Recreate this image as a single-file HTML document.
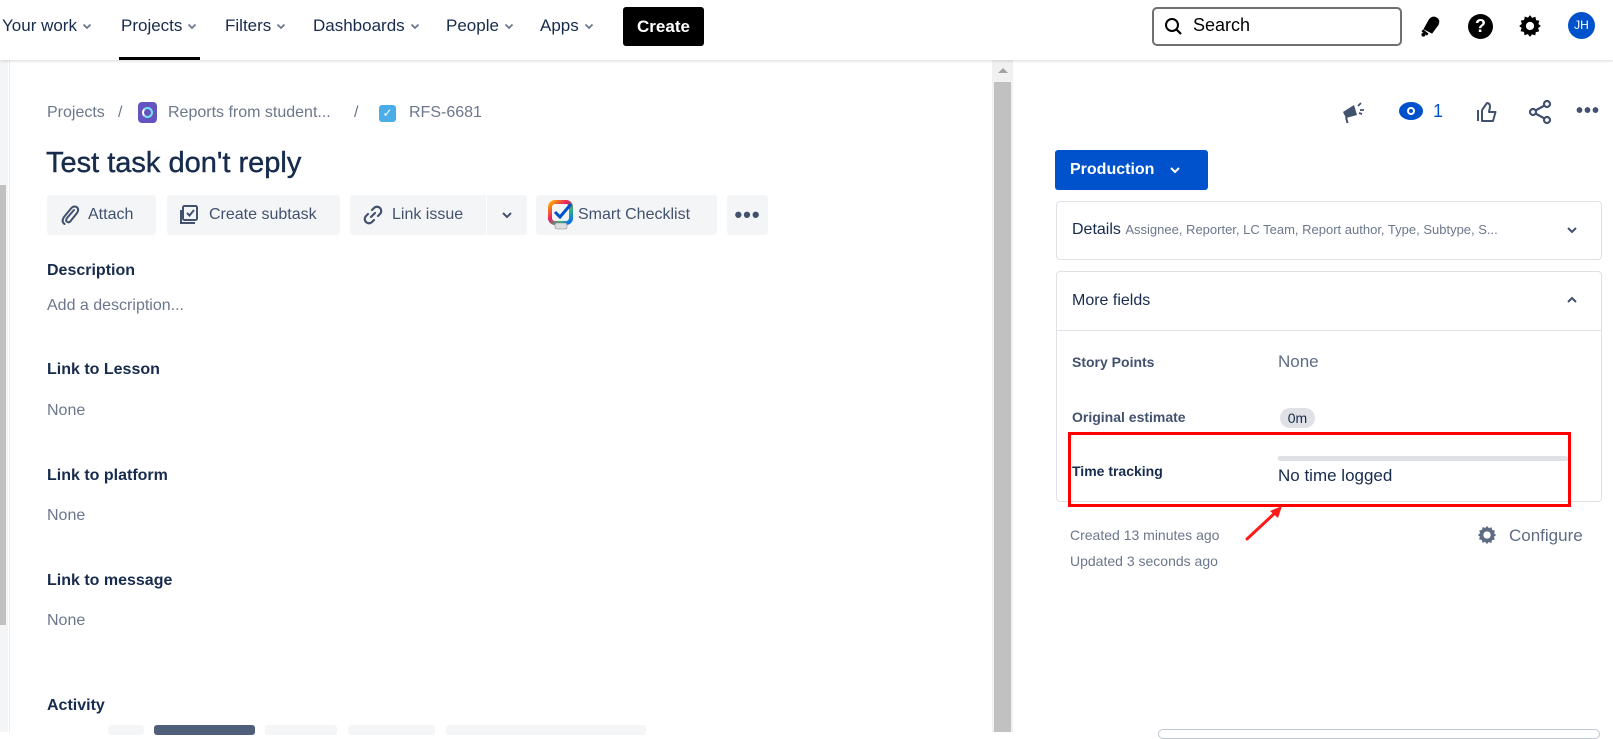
<!DOCTYPE html>
<html><head><meta charset="utf-8"><style>
*{box-sizing:border-box;margin:0;padding:0}
body{width:1613px;height:732px;overflow:hidden;background:#fff;font-family:"Liberation Sans",sans-serif;color:#172b4d;position:relative}
.a{position:absolute;white-space:nowrap}
.nav{position:absolute;left:0;top:0;width:1613px;height:60px;background:#fff;box-shadow:0 1px 3px rgba(0,0,0,.15);z-index:2}
.ni{position:absolute;top:16px;font-size:17px;color:#172b4d;display:flex;align-items:center}
.ni svg{margin-left:5px;margin-top:1px}
.btn{position:absolute;top:195px;height:40px;background:#f4f5f7;border-radius:3px;font-size:16px;color:#42526e;display:flex;align-items:center}
.lbl{position:absolute;left:47px;font-size:16px;font-weight:bold;color:#172b4d}
.none{position:absolute;left:47px;font-size:16px;color:#6b778c}
.card{position:absolute;left:1056px;width:546px;border:1px solid #dfe1e6;border-radius:4px}
.fl{position:absolute;left:1072px;font-size:14px;font-weight:bold;color:#42526e}
</style></head><body>
<div class="nav">
 <div class="ni" style="left:2px">Your work<svg width="10" height="7" viewBox="0 0 10 7"><path d="M1.5 1.5l3.5 3.5 3.5-3.5" fill="none" stroke="#6b778c" stroke-width="1.8"/></svg></div>
 <div class="ni" style="left:121px">Projects<svg width="10" height="7" viewBox="0 0 10 7"><path d="M1.5 1.5l3.5 3.5 3.5-3.5" fill="none" stroke="#6b778c" stroke-width="1.8"/></svg></div>
 <div class="a" style="left:119px;top:57px;width:81px;height:3px;background:#000"></div>
 <div class="ni" style="left:225px">Filters<svg width="10" height="7" viewBox="0 0 10 7"><path d="M1.5 1.5l3.5 3.5 3.5-3.5" fill="none" stroke="#6b778c" stroke-width="1.8"/></svg></div>
 <div class="ni" style="left:313px">Dashboards<svg width="10" height="7" viewBox="0 0 10 7"><path d="M1.5 1.5l3.5 3.5 3.5-3.5" fill="none" stroke="#6b778c" stroke-width="1.8"/></svg></div>
 <div class="ni" style="left:446px">People<svg width="10" height="7" viewBox="0 0 10 7"><path d="M1.5 1.5l3.5 3.5 3.5-3.5" fill="none" stroke="#6b778c" stroke-width="1.8"/></svg></div>
 <div class="ni" style="left:540px">Apps<svg width="10" height="7" viewBox="0 0 10 7"><path d="M1.5 1.5l3.5 3.5 3.5-3.5" fill="none" stroke="#6b778c" stroke-width="1.8"/></svg></div>
 <div class="a" style="left:623px;top:7px;width:81px;height:39px;background:#000;border-radius:3px;color:#fff;font-size:17px;font-weight:bold;text-align:center;line-height:39px">Create</div>
 <div class="a" style="left:1152px;top:7px;width:250px;height:39px;border:2px solid #707070;border-radius:5px"></div>
 <svg class="a" style="left:1164px;top:17px" width="20" height="20" viewBox="0 0 20 20"><circle cx="8" cy="8" r="6" fill="none" stroke="#000" stroke-width="2"/><path d="M12.5 12.5 17 17" stroke="#000" stroke-width="2.2"/></svg>
 <div class="a" style="left:1193px;top:15px;font-size:18px;color:#000">Search</div>
 <svg class="a" style="left:1418px;top:13px" width="26" height="26" viewBox="0 0 24 24"><path d="M5 15 L10 6 Q13 2 17 4 Q21 6 19 11 L13 19Z" fill="#000"/><path d="M4 16l5 4" stroke="#000" stroke-width="2.4"/><circle cx="5" cy="20" r="1.8" fill="#000"/></svg>
 <div class="a" style="left:1468px;top:14px;width:25px;height:25px;border-radius:50%;background:#000;color:#fff;font-weight:bold;font-size:18px;text-align:center;line-height:25px">?</div>
 <svg class="a" style="left:1517px;top:13px" width="26" height="26" viewBox="0 0 24 24"><path d="M12 2l2 2.5 3-1 .6 3.1 3.1.6-1 3L22 12l-2.5 2 1 3-3.1.6-.6 3.1-3-1L12 22l-2-2.5-3 1-.6-3.1-3.1-.6 1-3L2 12l2.5-2-1-3 3.1-.6.6-3.1 3 1z" fill="#000"/><circle cx="12" cy="12" r="3.8" fill="#fff"/></svg>
 <div class="a" style="left:1568px;top:12px;width:27px;height:27px;border-radius:50%;background:#0052cc;color:#fff;font-size:12px;text-align:center;line-height:27px">JH</div>
</div>
<div class="a" style="left:0;top:60px;width:8px;height:672px;background:#f4f5f7"></div>
<div class="a" style="left:0;top:185px;width:6px;height:440px;background:#c1c1c1"></div>
<div class="a" style="left:9px;top:60px;width:1px;height:672px;background:#ebecf0"></div>
<div class="a" style="left:992px;top:60px;width:21px;height:672px;background:#f1f1f1"></div>
<div class="a" style="left:998px;top:68px;width:0;height:0;border-left:5px solid transparent;border-right:5px solid transparent;border-bottom:5px solid #a3a3a3"></div>
<div class="a" style="left:994px;top:82px;width:17px;height:650px;background:#c1c1c1"></div>

<div class="a" style="left:47px;top:104px;font-size:16px;color:#6b778c">Projects</div>
<div class="a" style="left:118px;top:104px;font-size:16px;color:#6b778c">/</div>
<div class="a" style="left:138px;top:102px;width:19px;height:21px;background:#6554c0;border-radius:4px"><div style="margin:5px 4px;width:11px;height:11px;border-radius:50%;border:2px solid #79e2f2;border-left-color:#fff"></div></div>
<div class="a" style="left:168px;top:104px;font-size:16px;color:#6b778c">Reports from student...</div>
<div class="a" style="left:354px;top:104px;font-size:16px;color:#6b778c">/</div>
<div class="a" style="left:379px;top:105px;width:17px;height:17px;background:#4bade8;border-radius:3px;color:#fff;font-size:12px;text-align:center;line-height:17px">✓</div>
<div class="a" style="left:409px;top:104px;font-size:16px;color:#6b778c">RFS-6681</div>
<div class="a" style="left:46px;top:147px;font-size:29px;color:#172b4d;-webkit-text-stroke:0.4px #172b4d">Test task don't reply</div>

<div class="btn" style="left:47px;width:109px"><svg style="margin:0 8px 0 13px" width="20" height="22" viewBox="0 0 20 22"><path d="M14 6 L7 14 Q5 17 7.5 18 Q9.5 19 11 16.5 L17 9 Q19.5 5 16.5 3 Q13.5 1.5 11 4.5 L4 13 Q1 17.5 4.5 20" fill="none" stroke="#42526e" stroke-width="2" stroke-linecap="round"/></svg>Attach</div>
<div class="btn" style="left:167px;width:173px"><svg style="margin:0 8px 0 12px" width="22" height="22" viewBox="0 0 22 22"><rect x="4" y="2" width="14" height="14" rx="1.5" fill="none" stroke="#42526e" stroke-width="2"/><path d="M8 9l2.5 2.5L15 6" fill="none" stroke="#42526e" stroke-width="2"/><path d="M2 6v13h14" fill="none" stroke="#42526e" stroke-width="2"/></svg>Create subtask</div>
<div class="btn" style="left:350px;width:136px;border-radius:3px 0 0 3px"><svg style="margin:0 8px 0 12px" width="22" height="22" viewBox="0 0 22 22"><path d="M9 13l4-4M10 6l2-2a4 4 0 0 1 6 6l-2 2M12 16l-2 2a4 4 0 0 1-6-6l2-2" fill="none" stroke="#42526e" stroke-width="2.2" stroke-linecap="round"/></svg>Link issue</div>
<div class="btn" style="left:487px;width:40px;border-radius:0 3px 3px 0;justify-content:center"><svg width="12" height="8" viewBox="0 0 12 8"><path d="M2 2l4 4 4-4" fill="none" stroke="#42526e" stroke-width="2"/></svg></div>
<div class="btn" style="left:536px;width:181px"><svg style="margin:0 4px 0 12px" width="26" height="30" viewBox="0 0 26 30"><rect x="2" y="2" width="21" height="21" rx="5" fill="none" stroke="url(#g)" stroke-width="4"/><defs><linearGradient id="g" x1="0" y1="0" x2="1" y2="1"><stop offset="0" stop-color="#ffab00"/><stop offset=".4" stop-color="#e91e63"/><stop offset=".7" stop-color="#36b37e"/><stop offset="1" stop-color="#0065ff"/></linearGradient></defs><path d="M7 12l5 5 11-13" fill="none" stroke="#0052cc" stroke-width="3"/><rect x="7" y="23" width="12" height="6" rx="2" fill="#ddd" stroke="#888" stroke-width=".6"/></svg>Smart Checklist</div>
<div class="btn" style="left:727px;width:41px;justify-content:center;font-size:22px;font-weight:bold;letter-spacing:1px;color:#42526e">•••</div>

<div class="lbl" style="top:262px">Description</div>
<div class="none" style="top:297px">Add a description...</div>
<div class="lbl" style="top:361px">Link to Lesson</div>
<div class="none" style="top:402px">None</div>
<div class="lbl" style="top:467px">Link to platform</div>
<div class="none" style="top:507px">None</div>
<div class="lbl" style="top:572px">Link to message</div>
<div class="none" style="top:612px">None</div>
<div class="lbl" style="top:697px">Activity</div>
<div class="a" style="left:108px;top:725px;width:36px;height:10px;background:#f4f5f7;border-radius:3px"></div>
<div class="a" style="left:154px;top:725px;width:101px;height:10px;background:#505f79;border-radius:3px"></div>
<div class="a" style="left:265px;top:725px;width:72px;height:10px;background:#f4f5f7;border-radius:3px"></div>
<div class="a" style="left:348px;top:725px;width:87px;height:10px;background:#f4f5f7;border-radius:3px"></div>
<div class="a" style="left:446px;top:725px;width:200px;height:10px;background:#f4f5f7;border-radius:3px"></div>

<svg class="a" style="left:1340px;top:100px" width="28" height="26" viewBox="0 0 28 26"><path d="M3 12 L14 5 L17 15 L6 18Z" fill="#42526e"/><path d="M6 17l1.5 6" stroke="#42526e" stroke-width="2"/><path d="M18 6l3-3M20 10h4M19 13l3 1" stroke="#42526e" stroke-width="1.8"/></svg>
<svg class="a" style="left:1398px;top:101px" width="26" height="20" viewBox="0 0 26 20"><ellipse cx="13" cy="10" rx="12" ry="9" fill="#0052cc"/><circle cx="13" cy="10" r="4" fill="#fff"/><circle cx="13" cy="10" r="2" fill="#0052cc"/></svg>
<div class="a" style="left:1433px;top:101px;font-size:18px;color:#0052cc">1</div>
<svg class="a" style="left:1475px;top:100px" width="24" height="24" viewBox="0 0 24 24"><path d="M3 10v11M7 10v11h11l2.5-9H14l1-5q0-4-3-4L7 10" fill="none" stroke="#42526e" stroke-width="2" stroke-linejoin="round"/></svg>
<svg class="a" style="left:1527px;top:99px" width="26" height="26" viewBox="0 0 26 26"><circle cx="20" cy="5" r="3" fill="none" stroke="#42526e" stroke-width="2.2"/><circle cx="6" cy="13" r="3" fill="none" stroke="#42526e" stroke-width="2.2"/><circle cx="20" cy="21" r="3" fill="none" stroke="#42526e" stroke-width="2.2"/><path d="M8.5 11.5l9-5M8.5 14.5l9 5" stroke="#42526e" stroke-width="2.2"/></svg>
<div class="a" style="left:1576px;top:100px;font-size:20px;font-weight:bold;color:#42526e;letter-spacing:1px">•••</div>

<div class="a" style="left:1055px;top:150px;width:153px;height:40px;background:#0052cc;border-radius:3px;color:#fff;font-size:16px;font-weight:bold;line-height:40px;padding-left:15px">Production <svg style="margin-left:10px" width="12" height="8" viewBox="0 0 12 8"><path d="M2 2l4 4 4-4" fill="none" stroke="#fff" stroke-width="2"/></svg></div>

<div class="card" style="top:201px;height:59px">
 <div class="a" style="left:15px;top:19px;font-size:16px;color:#172b4d">Details <span style="font-size:13px;color:#6b778c">Assignee, Reporter, LC Team, Report author, Type, Subtype, S...</span></div>
 <svg class="a" style="left:509px;top:24px" width="12" height="8" viewBox="0 0 12 8"><path d="M2 2l4 4 4-4" fill="none" stroke="#42526e" stroke-width="2"/></svg>
</div>
<div class="card" style="top:271px;height:231px">
 <div class="a" style="left:15px;top:20px;font-size:16px;color:#172b4d">More fields</div>
 <svg class="a" style="left:509px;top:24px" width="12" height="8" viewBox="0 0 12 8"><path d="M2 6l4-4 4 4" fill="none" stroke="#42526e" stroke-width="2"/></svg>
 <div class="a" style="left:0;top:58px;width:544px;height:1px;background:#dfe1e6"></div>
</div>
<div class="fl" style="top:354px">Story Points</div>
<div class="a" style="left:1278px;top:352px;font-size:17px;color:#5e6c84">None</div>
<div class="fl" style="top:409px">Original estimate</div>
<div class="a" style="left:1280px;top:408px;width:35px;height:20px;background:#dfe1e6;border-radius:10px;font-size:14px;color:#172b4d;text-align:center;line-height:20px">0m</div>
<div class="a" style="left:1278px;top:456px;width:290px;height:5px;background:#dfe1e6;border-radius:2px"></div>
<div class="fl" style="top:463px;color:#172b4d">Time tracking</div>
<div class="a" style="left:1278px;top:466px;font-size:17px;color:#172b4d">No time logged</div>
<div class="a" style="left:1068px;top:432px;width:503px;height:75px;border:3px solid #ff0000"></div>
<svg class="a" style="left:1240px;top:500px" width="50" height="45" viewBox="0 0 50 45"><path d="M7 39 L36 12" stroke="#ff1a1a" stroke-width="3" stroke-linecap="round"/><path d="M42 6 L30 11 L38 18Z" fill="#ff1a1a"/></svg>

<div class="a" style="left:1070px;top:527px;font-size:14px;color:#6b778c">Created 13 minutes ago</div>
<div class="a" style="left:1070px;top:553px;font-size:14px;color:#6b778c">Updated 3 seconds ago</div>
<svg class="a" style="left:1476px;top:524px" width="22" height="22" viewBox="0 0 24 24"><path d="M12 2l2 2.5 3-1 .6 3.1 3.1.6-1 3L22 12l-2.5 2 1 3-3.1.6-.6 3.1-3-1L12 22l-2-2.5-3 1-.6-3.1-3.1-.6 1-3L2 12l2.5-2-1-3 3.1-.6.6-3.1 3 1z" fill="#5e6c84"/><circle cx="12" cy="12" r="4" fill="#fff"/></svg>
<div class="a" style="left:1509px;top:526px;font-size:17px;color:#5e6c84">Configure</div>
<div class="a" style="left:1158px;top:729px;width:442px;height:10px;border:1px solid #c1c7d0;border-radius:6px"></div>
</body></html>
